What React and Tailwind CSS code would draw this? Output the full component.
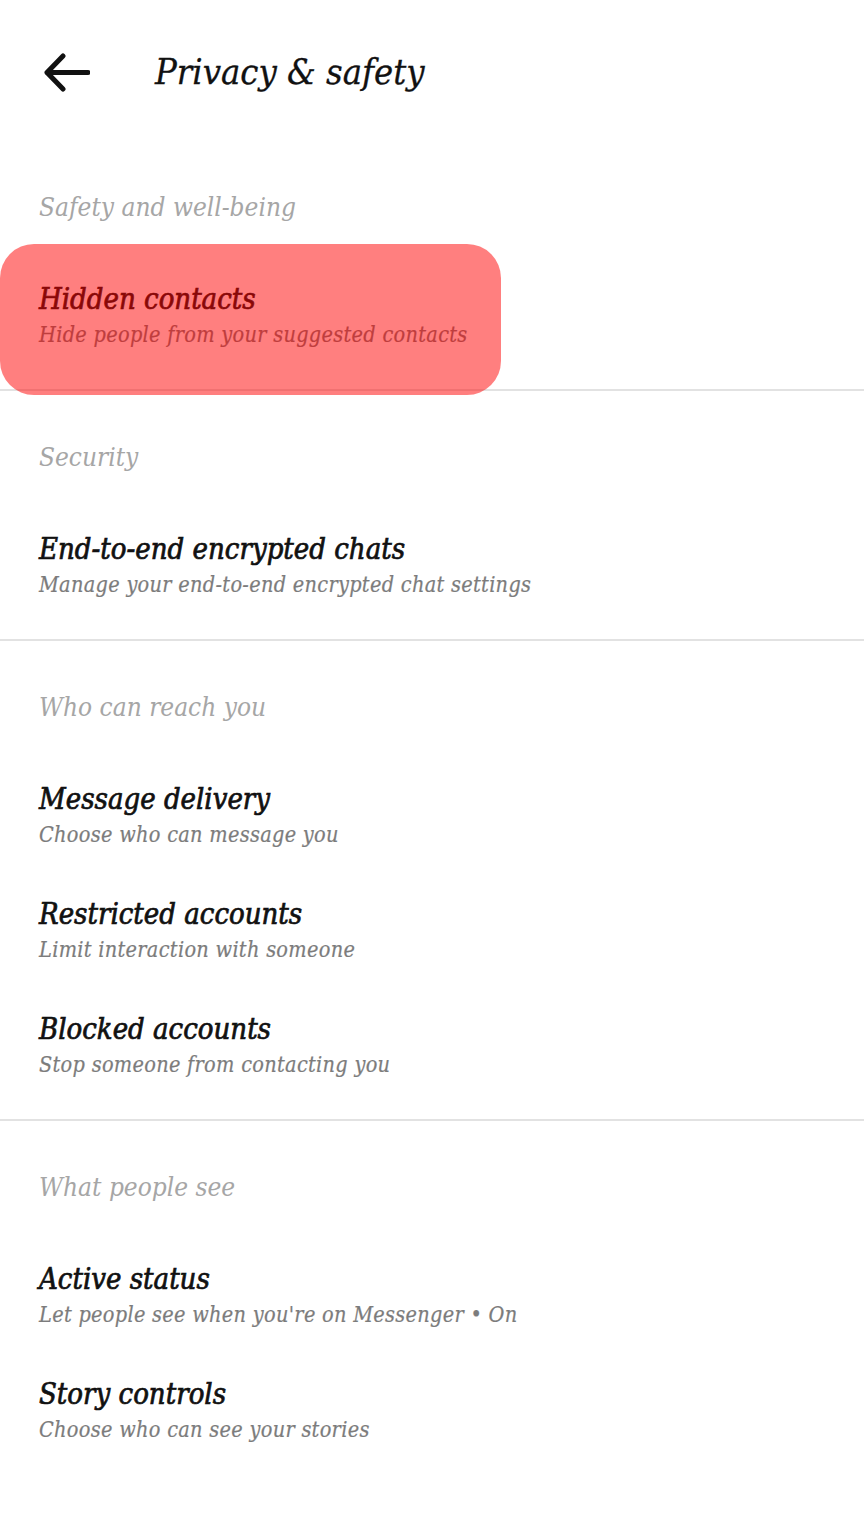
import React from "react";

const serif = "font-['DejaVu_Serif_Condensed','DejaVu_Serif',serif] italic";

const sections = [
  {
    label: "Safety and well-being",
    items: [
      { title: "Hidden contacts", sub: "Hide people from your suggested contacts" },
    ],
  },
  {
    label: "Security",
    items: [
      {
        title: "End-to-end encrypted chats",
        sub: "Manage your end-to-end encrypted chat settings",
      },
    ],
  },
  {
    label: "Who can reach you",
    items: [
      { title: "Message delivery", sub: "Choose who can message you" },
      { title: "Restricted accounts", sub: "Limit interaction with someone" },
      { title: "Blocked accounts", sub: "Stop someone from contacting you" },
    ],
  },
  {
    label: "What people see",
    items: [
      { title: "Active status", sub: "Let people see when you're on Messenger • On" },
      { title: "Story controls", sub: "Choose who can see your stories" },
    ],
  },
];

const Item = ({ title, sub }) => (
  <div className="h-[115px] pt-[22px] px-[39px]">
    <div className="text-[29px] leading-[35px] font-normal text-[#111111] whitespace-nowrap [-webkit-text-stroke:0.7px_#111111]">
      {title}
    </div>
    <div className="text-[21.5px] leading-[35px] text-[#7c7c7c] whitespace-nowrap tracking-[0.3px] [-webkit-text-stroke:0.2px_#7c7c7c]">
      {sub}
    </div>
  </div>
);

export default function App() {
  return (
    <div className={`relative w-full min-h-[1536px] bg-white ${serif}`}>
      {/* header */}
      <div className="h-[146px] flex items-center">
        <button className="ml-[44px] w-[46px] h-[40px] flex items-center justify-center">
          <svg width="46" height="40" viewBox="0 0 46 40" fill="none">
            <path
              d="M19 3 L3 19.5 L19 36 M3 19.5 H44"
              stroke="#111111"
              strokeWidth="5"
              strokeLinecap="round"
              strokeLinejoin="round"
            />
          </svg>
        </button>
        <h1 className="ml-[65px] text-[36px] leading-[40px] font-normal text-[#111111] -mt-[2px] [-webkit-text-stroke:0.3px_#111111]">
          Privacy &amp; safety
        </h1>
      </div>

      {sections.map((s, i) => (
        <div key={s.label} className={i > 0 ? "border-t-2 border-[#e2e2e2]" : ""}>
          <div
            className={`${i === 0 ? "h-[114px] pt-[43px]" : "h-[119px] pt-[48px]"} px-[39px] text-[26px] leading-[36px] text-[#a6a6a6] whitespace-nowrap`}
          >
            {s.label}
          </div>
          {s.items.map((it) => (
            <Item key={it.title} {...it} />
          ))}
          <div className="h-[14px]" />
        </div>
      ))}

      {/* highlight overlay */}
      <div className="absolute top-[244px] left-0 w-[501px] h-[151px] rounded-[34px] bg-[#ff0000]/50" />
    </div>
  );
}
